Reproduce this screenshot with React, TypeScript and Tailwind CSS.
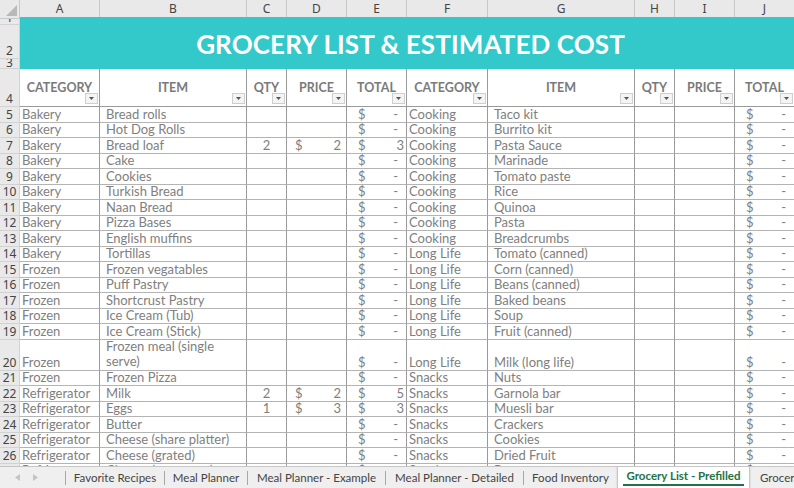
import React from "react";

const COLS =
  "grid grid-cols-[20px_80px_147px_40px_60px_60px_81px_147px_40px_60px_60px]";

type Side = { cat: string; item: string; qty?: string; price?: string; total?: string };
type Row = { n: number; l: Side; r: Side; tall?: boolean };

const rows: Row[] = [
  { n: 5, l: { cat: "Bakery", item: "Bread rolls" }, r: { cat: "Cooking", item: "Taco kit" } },
  { n: 6, l: { cat: "Bakery", item: "Hot Dog Rolls" }, r: { cat: "Cooking", item: "Burrito kit" } },
  { n: 7, l: { cat: "Bakery", item: "Bread loaf", qty: "2", price: "2", total: "3" }, r: { cat: "Cooking", item: "Pasta Sauce" } },
  { n: 8, l: { cat: "Bakery", item: "Cake" }, r: { cat: "Cooking", item: "Marinade" } },
  { n: 9, l: { cat: "Bakery", item: "Cookies" }, r: { cat: "Cooking", item: "Tomato paste" } },
  { n: 10, l: { cat: "Bakery", item: "Turkish Bread" }, r: { cat: "Cooking", item: "Rice" } },
  { n: 11, l: { cat: "Bakery", item: "Naan Bread" }, r: { cat: "Cooking", item: "Quinoa" } },
  { n: 12, l: { cat: "Bakery", item: "Pizza Bases" }, r: { cat: "Cooking", item: "Pasta" } },
  { n: 13, l: { cat: "Bakery", item: "English muffins" }, r: { cat: "Cooking", item: "Breadcrumbs" } },
  { n: 14, l: { cat: "Bakery", item: "Tortillas" }, r: { cat: "Long Life", item: "Tomato (canned)" } },
  { n: 15, l: { cat: "Frozen", item: "Frozen vegatables" }, r: { cat: "Long Life", item: "Corn (canned)" } },
  { n: 16, l: { cat: "Frozen", item: "Puff Pastry" }, r: { cat: "Long Life", item: "Beans (canned)" } },
  { n: 17, l: { cat: "Frozen", item: "Shortcrust Pastry" }, r: { cat: "Long Life", item: "Baked beans" } },
  { n: 18, l: { cat: "Frozen", item: "Ice Cream (Tub)" }, r: { cat: "Long Life", item: "Soup" } },
  { n: 19, l: { cat: "Frozen", item: "Ice Cream (Stick)" }, r: { cat: "Long Life", item: "Fruit (canned)" } },
  { n: 20, tall: true, l: { cat: "Frozen", item: "Frozen meal (single serve)" }, r: { cat: "Long Life", item: "Milk (long life)" } },
  { n: 21, l: { cat: "Frozen", item: "Frozen Pizza" }, r: { cat: "Snacks", item: "Nuts" } },
  { n: 22, l: { cat: "Refrigerator", item: "Milk", qty: "2", price: "2", total: "5" }, r: { cat: "Snacks", item: "Garnola bar" } },
  { n: 23, l: { cat: "Refrigerator", item: "Eggs", qty: "1", price: "3", total: "3" }, r: { cat: "Snacks", item: "Muesli bar" } },
  { n: 24, l: { cat: "Refrigerator", item: "Butter" }, r: { cat: "Snacks", item: "Crackers" } },
  { n: 25, l: { cat: "Refrigerator", item: "Cheese (share platter)" }, r: { cat: "Snacks", item: "Cookies" } },
  { n: 26, l: { cat: "Refrigerator", item: "Cheese (grated)" }, r: { cat: "Snacks", item: "Dried Fruit" } },
  { n: 27, l: { cat: "Refrigerator", item: "Cheese (parmesan)" }, r: { cat: "Snacks", item: "Popcorn" } },
];

const cellBase =
  "border-r border-b border-r-[#9a9a9a] border-b-[#b4b4b4] text-[#808080] text-[13px] leading-[15px] flex items-end overflow-hidden";
const cell = `${cellBase} whitespace-nowrap`;

function SideCells({ s, tall }: { s: Side; tall?: boolean }) {
  return (
    <>
      <div className={`${cell} pl-[2px]`}>{s.cat}</div>
      {tall ? (
        <div className={`${cellBase} pl-[6px]`}>
          <span className="block w-[136px] leading-[15px] pb-[1px]">{s.item}</span>
        </div>
      ) : (
        <div className={`${cell} pl-[6px]`}>{s.item}</div>
      )}
      <div className={`${cell} justify-center`}>{s.qty ?? ""}</div>
      <div className={`${cell} justify-between pl-[8px] pr-[5px]`}>
        {s.price ? (
          <>
            <span>$</span>
            <span>{s.price}</span>
          </>
        ) : null}
      </div>
      <div className={`${cell} justify-between pl-[11px] ${s.total ? "pr-[2px]" : "pr-[8px]"}`}>
        <span>$</span>
        <span>{s.total ?? "-"}</span>
      </div>
    </>
  );
}

function FilterBtn() {
  return (
    <div className="absolute right-[1px] bottom-[2px] w-[13px] h-[11px] bg-[#f4f4f4] border border-[#cfcfcf] flex items-center justify-center">
      <svg width="5" height="3" viewBox="0 0 5 3">
        <path d="M0 0 L5 0 L2.5 3 Z" fill="#555" />
      </svg>
    </div>
  );
}

const headerCell =
  "relative border-r border-b border-r-[#9a9a9a] border-b-[#9a9a9a] flex items-center justify-center text-[#7a7a7a] font-bold text-[12.5px] pt-[1px]";

const rowHead =
  "bg-[#e9e9e9] border-r border-b border-[#d2d2d2] text-[#444] text-[12px] leading-[14px] flex items-end justify-center font-['Noto_Sans',sans-serif]";

function Tab({ w, label }: { w: string; label: string }) {
  return (
    <div className={`${w} h-full flex items-center shrink-0`}>
      <div className="w-px h-[14px] bg-[#a8a8a8]" />
      <div className="flex-1 text-center text-[11.5px] text-[#444] whitespace-nowrap font-['Lato',sans-serif]">
        {label}
      </div>
    </div>
  );
}

export default function App() {
  const letters = ["A", "B", "C", "D", "E", "F", "G", "H", "I", "J"];
  return (
    <div className="w-[794px] h-[488px] overflow-hidden bg-white flex flex-col font-['Lato',sans-serif]">
      <div className="flex-1 overflow-hidden">
        <div className="w-[795px]">
          {/* column letters */}
          <div className={`${COLS} h-[17px]`}>
            <div className="relative bg-[#e9e9e9] border-r border-b border-[#c8c8c8]">
              <svg className="absolute right-[2px] bottom-[2px]" width="11" height="11" viewBox="0 0 11 11">
                <path d="M11 0 L11 11 L0 11 Z" fill="#b9b9b9" />
              </svg>
            </div>
            {letters.map((l) => (
              <div
                key={l}
                className="bg-[#e9e9e9] border-r border-b border-[#c8c8c8] text-[#444] text-[12px] flex items-center justify-center font-['Noto_Sans',sans-serif]"
              >
                {l}
              </div>
            ))}
          </div>

          {/* title band rows 1-3 */}
          <div className="flex h-[52px]">
            <div className="w-[20px] flex flex-col">
              <div className={`${rowHead} h-[8px] overflow-hidden items-start`}>
                <span className="-mt-[6px]">1</span>
              </div>
              <div className={`${rowHead} h-[34px]`}>2</div>
              <div className={`${rowHead} h-[10px] overflow-hidden`}>
                <span className="leading-[10px]">3</span>
              </div>
            </div>
            <div className="flex-1 bg-[#33c8c9] flex items-center justify-center">
              <span className="text-white font-bold text-[26px] tracking-[0.1px] pl-[6px] pt-[2px] font-['Lato',sans-serif]">
                GROCERY LIST &amp; ESTIMATED COST
              </span>
            </div>
          </div>

          {/* header row 4 */}
          <div className={`${COLS} h-[38px]`}>
            <div className={rowHead}>4</div>
            {["CATEGORY", "ITEM", "QTY", "PRICE", "TOTAL", "CATEGORY", "ITEM", "QTY", "PRICE", "TOTAL"].map((h, i) => (
              <div key={i} className={headerCell}>
                {h}
                <FilterBtn />
              </div>
            ))}
          </div>

          {rows.map((r) => (
            <div key={r.n} className={`${COLS} ${r.tall ? "h-[31px]" : "h-[15.5px]"}`}>
              <div className={rowHead}>{r.n}</div>
              <SideCells s={r.l} tall={r.tall} />
              <SideCells s={r.r} />
            </div>
          ))}
        </div>
      </div>

      {/* sheet tabs */}
      <div className="h-[22px] bg-[#efefef] border-t border-[#c6c6c6] flex items-center overflow-hidden">
        <div className="w-[65px] shrink-0 h-full flex items-center pl-[15px] gap-[13px]">
          <svg width="5" height="7" viewBox="0 0 5 7">
            <path d="M5 0 L0 3.5 L5 7 Z" fill="#c4c4c4" />
          </svg>
          <svg width="5" height="7" viewBox="0 0 5 7">
            <path d="M0 0 L5 3.5 L0 7 Z" fill="#c4c4c4" />
          </svg>
        </div>
        <Tab w="w-[99px]" label="Favorite Recipes" />
        <Tab w="w-[83px]" label="Meal Planner" />
        <Tab w="w-[138px]" label="Meal Planner - Example" />
        <Tab w="w-[138px]" label="Meal Planner - Detailed" />
        <Tab w="w-[94px]" label="Food Inventory" />
        <div className="w-[133px] shrink-0 h-[23px] -mt-[2px] bg-white border-x border-[#c6c6c6] flex items-center justify-center shadow-[0_1px_2px_rgba(0,0,0,0.15)]">
          <span className="text-[11.5px] font-bold text-[#217346] whitespace-nowrap border-b-2 border-[#217346] leading-[16px] px-[3px] font-['Lato',sans-serif]">
            Grocery List - Prefilled
          </span>
        </div>
        <div className="pl-[10px] text-[11.5px] text-[#444] whitespace-nowrap font-['Lato',sans-serif]">Grocery List</div>
      </div>
    </div>
  );
}
